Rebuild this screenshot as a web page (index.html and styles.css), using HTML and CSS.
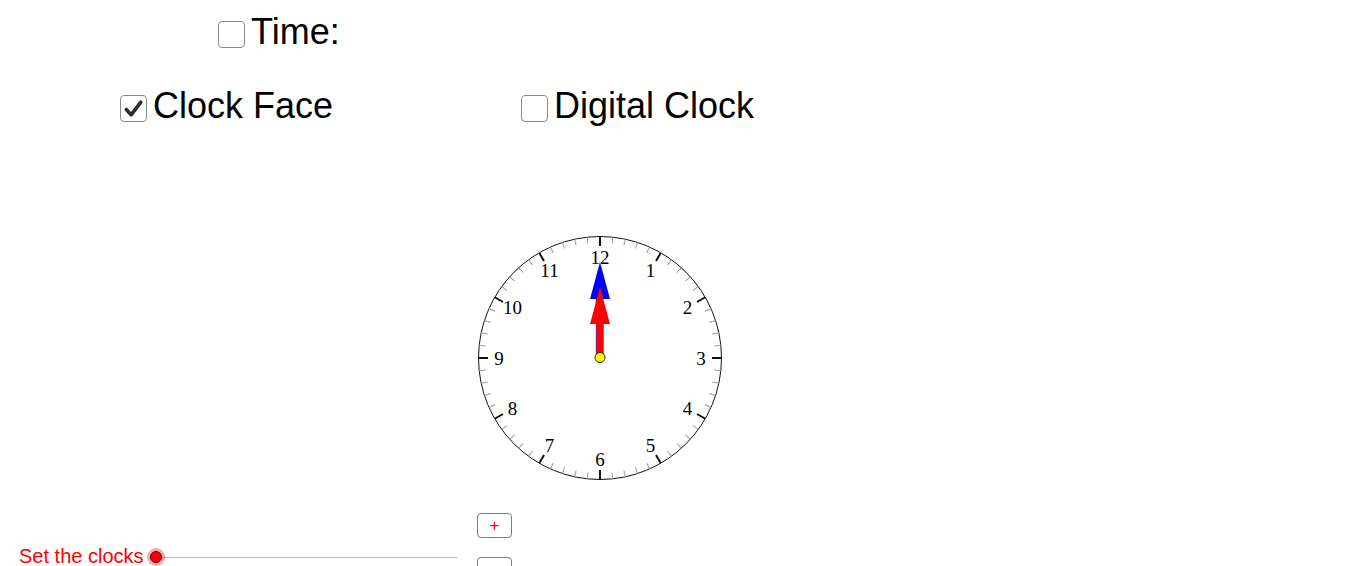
FILE: index.html
```html
<!DOCTYPE html>
<html lang="en">
<head>
<meta charset="utf-8">
<title>Clocks</title>
<link rel="stylesheet" href="styles.css">
</head>
<body>
<main class="applet">
  <label class="check check-time">
    <span class="box"></span><span class="check-text">Time:</span>
  </label>
  <label class="check check-face">
    <span class="box checked">
      <svg viewBox="0 0 26 26" width="26" height="26"><polyline points="5.5,13.5 10.5,19 20.5,6" fill="none" stroke="#2e2e2e" stroke-width="3.8" stroke-linecap="round" stroke-linejoin="round"/></svg>
    </span><span class="check-text">Clock Face</span>
  </label>
  <label class="check check-digital">
    <span class="box"></span><span class="check-text">Digital Clock</span>
  </label>

  <svg class="clock" viewBox="-130 -130 260 260" width="260" height="260">
    <defs>
      <line id="minor" x1="0" y1="-121.5" x2="0" y2="-115" stroke="#9a9a9a" stroke-width="1"/>
      <line id="major" x1="0" y1="-121.5" x2="0" y2="-112" stroke="#111" stroke-width="2"/>
    </defs>
    <circle cx="0" cy="0" r="121.5" fill="#fff" stroke="#111" stroke-width="1"/>
    <g class="minors">
      <use href="#minor" transform="rotate(6)"/><use href="#minor" transform="rotate(12)"/><use href="#minor" transform="rotate(18)"/><use href="#minor" transform="rotate(24)"/>
      <use href="#minor" transform="rotate(36)"/><use href="#minor" transform="rotate(42)"/><use href="#minor" transform="rotate(48)"/><use href="#minor" transform="rotate(54)"/>
      <use href="#minor" transform="rotate(66)"/><use href="#minor" transform="rotate(72)"/><use href="#minor" transform="rotate(78)"/><use href="#minor" transform="rotate(84)"/>
      <use href="#minor" transform="rotate(96)"/><use href="#minor" transform="rotate(102)"/><use href="#minor" transform="rotate(108)"/><use href="#minor" transform="rotate(114)"/>
      <use href="#minor" transform="rotate(126)"/><use href="#minor" transform="rotate(132)"/><use href="#minor" transform="rotate(138)"/><use href="#minor" transform="rotate(144)"/>
      <use href="#minor" transform="rotate(156)"/><use href="#minor" transform="rotate(162)"/><use href="#minor" transform="rotate(168)"/><use href="#minor" transform="rotate(174)"/>
      <use href="#minor" transform="rotate(186)"/><use href="#minor" transform="rotate(192)"/><use href="#minor" transform="rotate(198)"/><use href="#minor" transform="rotate(204)"/>
      <use href="#minor" transform="rotate(216)"/><use href="#minor" transform="rotate(222)"/><use href="#minor" transform="rotate(228)"/><use href="#minor" transform="rotate(234)"/>
      <use href="#minor" transform="rotate(246)"/><use href="#minor" transform="rotate(252)"/><use href="#minor" transform="rotate(258)"/><use href="#minor" transform="rotate(264)"/>
      <use href="#minor" transform="rotate(276)"/><use href="#minor" transform="rotate(282)"/><use href="#minor" transform="rotate(288)"/><use href="#minor" transform="rotate(294)"/>
      <use href="#minor" transform="rotate(306)"/><use href="#minor" transform="rotate(312)"/><use href="#minor" transform="rotate(318)"/><use href="#minor" transform="rotate(324)"/>
      <use href="#minor" transform="rotate(336)"/><use href="#minor" transform="rotate(342)"/><use href="#minor" transform="rotate(348)"/><use href="#minor" transform="rotate(354)"/>
    </g>
    <g class="majors">
      <use href="#major"/><use href="#major" transform="rotate(30)"/><use href="#major" transform="rotate(60)"/><use href="#major" transform="rotate(90)"/>
      <use href="#major" transform="rotate(120)"/><use href="#major" transform="rotate(150)"/><use href="#major" transform="rotate(180)"/><use href="#major" transform="rotate(210)"/>
      <use href="#major" transform="rotate(240)"/><use href="#major" transform="rotate(270)"/><use href="#major" transform="rotate(300)"/><use href="#major" transform="rotate(330)"/>
    </g>
    <g class="numerals">
      <text x="0" y="-101">12</text>
      <text x="50.5" y="-87.5">1</text>
      <text x="87.5" y="-50.5">2</text>
      <text x="101" y="0">3</text>
      <text x="87.5" y="50.5">4</text>
      <text x="50.5" y="87.5">5</text>
      <text x="0" y="101">6</text>
      <text x="-50.5" y="87.5">7</text>
      <text x="-87.5" y="50.5">8</text>
      <text x="-101" y="0">9</text>
      <text x="-87.5" y="-50.5">10</text>
      <text x="-50.5" y="-87.5">11</text>
    </g>
    <g class="hand-blue">
      <rect x="-4.2" y="-60" width="7.5" height="60" fill="#4b2bd6"/>
      <polygon points="0,-96 -10,-59 10,-59" fill="#0000ff"/>
    </g>
    <g class="hand-red">
      <rect x="-3.4" y="-35" width="7" height="35" fill="#ff0000"/>
      <polygon points="0,-71 -10,-34 10,-34" fill="#ff0000"/>
    </g>
    <circle cx="0" cy="-0.5" r="5" fill="#ffff00" stroke="#222" stroke-width="1"/>
  </svg>

  <button class="step-btn step-plus" type="button">+</button>
  <button class="step-btn step-minus" type="button" aria-label="minus"></button>

  <div class="slider">
    <span class="slider-label">Set the clocks</span>
    <span class="slider-track"></span>
    <span class="slider-halo"></span>
    <span class="slider-knob"></span>
  </div>
</main>
</body>
</html>
```

FILE: styles.css
```css
html, body {
  margin: 0;
  padding: 0;
  background: #fff;
}

body {
  width: 1366px;
  height: 566px;
  overflow: hidden;
  font-family: "Liberation Sans", Arial, sans-serif;
}

.applet {
  position: relative;
  width: 1366px;
  height: 566px;
  overflow: hidden;
}

/* checkboxes */
.check {
  position: absolute;
  display: flex;
  align-items: flex-start;
  gap: 6px;
  color: #000;
  cursor: pointer;
}

.check-time { left: 218px; top: 14px; }
.check-face { left: 120px; top: 88px; }
.check-digital { left: 521px; top: 88px; }

.box {
  box-sizing: border-box;
  width: 27px;
  height: 27px;
  margin-top: 7px;
  border: 1.5px solid #8a8a8a;
  border-radius: 4px;
  background: #fff;
  display: flex;
  align-items: center;
  justify-content: center;
  flex: none;
}

.box svg {
  display: block;
}

.check-text {
  font-size: 36px;
  line-height: 36px;
}

/* clock */
.clock {
  position: absolute;
  left: 470px;
  top: 228px;
  overflow: visible;
}

.numerals text {
  font-family: "Liberation Serif", "Times New Roman", serif;
  font-size: 19px;
  fill: #000;
  text-anchor: middle;
  dominant-baseline: central;
}

/* step buttons */
.step-btn {
  position: absolute;
  left: 477px;
  box-sizing: border-box;
  width: 35px;
  height: 25px;
  padding: 0;
  border: 1.5px solid #7d7d7d;
  border-radius: 4px;
  background: #fff;
  color: #ff0000;
  font-family: "Liberation Sans", Arial, sans-serif;
  font-size: 17px;
  line-height: 20px;
}

.step-plus { top: 513px; }
.step-minus { top: 557px; }

/* slider */
.slider {
  position: absolute;
  left: 0;
  top: 540px;
  width: 470px;
  height: 26px;
}

.slider-label {
  position: absolute;
  left: 19px;
  top: 6px;
  color: #ff0000;
  font-size: 20px;
  line-height: 20px;
  white-space: nowrap;
}

.slider-track {
  position: absolute;
  left: 156px;
  top: 16.5px;
  width: 301px;
  height: 1px;
  background: #f2a2a2;
}

.slider-halo {
  position: absolute;
  left: 147px;
  top: 8px;
  width: 18px;
  height: 18px;
  border-radius: 50%;
  background: rgba(255, 0, 0, 0.35);
}

.slider-knob {
  position: absolute;
  left: 150px;
  top: 11px;
  box-sizing: border-box;
  width: 12px;
  height: 12px;
  border-radius: 50%;
  background: #ff0000;
  border: 1.5px solid #3a1010;
}
```
